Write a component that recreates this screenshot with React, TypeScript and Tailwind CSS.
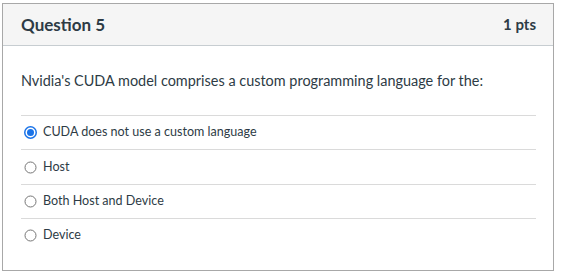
import React from "react";

const answers = [
  { label: "CUDA does not use a custom language", checked: true },
  { label: "Host", checked: false },
  { label: "Both Host and Device", checked: false },
  { label: "Device", checked: false },
];

function Radio({ checked }: { checked: boolean }) {
  if (checked) {
    return (
      <svg width="13" height="13" viewBox="0 0 13 13" className="shrink-0">
        <circle cx="6.5" cy="6.5" r="5.75" fill="white" stroke="#1a73e8" strokeWidth="1.5" />
        <circle cx="6.5" cy="6.5" r="3.5" fill="#1a73e8" />
      </svg>
    );
  }
  return (
    <svg width="13" height="13" viewBox="0 0 13 13" className="shrink-0">
      <circle cx="6.5" cy="6.5" r="5.5" fill="white" stroke="#767676" strokeWidth="1" />
    </svg>
  );
}

export default function App() {
  return (
    <div className="w-[565px] h-[274px] bg-white pt-[3px] pl-[2px]" style={{ fontFamily: "Lato, 'Noto Sans', sans-serif" }}>
      <div className="w-[552px] h-[268px] border border-[#a8a8a8] bg-white text-[#2d3b45]">
        <div className="h-[42px] bg-[#f5f5f5] border-b border-[#c7cdd1] flex items-center justify-between pl-[18px] pr-[17px]">
          <span className="text-[17px] font-bold">Question 5</span>
          <span className="text-[15px] font-bold text-[#2d3b45]">1 pts</span>
        </div>
        <div className="pl-[18px] pr-[17px]">
          <p className="text-[14.45px] mt-[25px] h-[20px] leading-[20px]">
            Nvidia's CUDA model comprises a custom programming language for the:
          </p>
          <div className="mt-[24px]">
            {answers.map((a) => (
              <div key={a.label} className="h-[34.4px] border-t border-[#dadada] flex items-center gap-[6px] pl-[3px]">
                <Radio checked={a.checked} />
                <span className="text-[12.55px]">{a.label}</span>
              </div>
            ))}
          </div>
        </div>
      </div>
    </div>
  );
}
